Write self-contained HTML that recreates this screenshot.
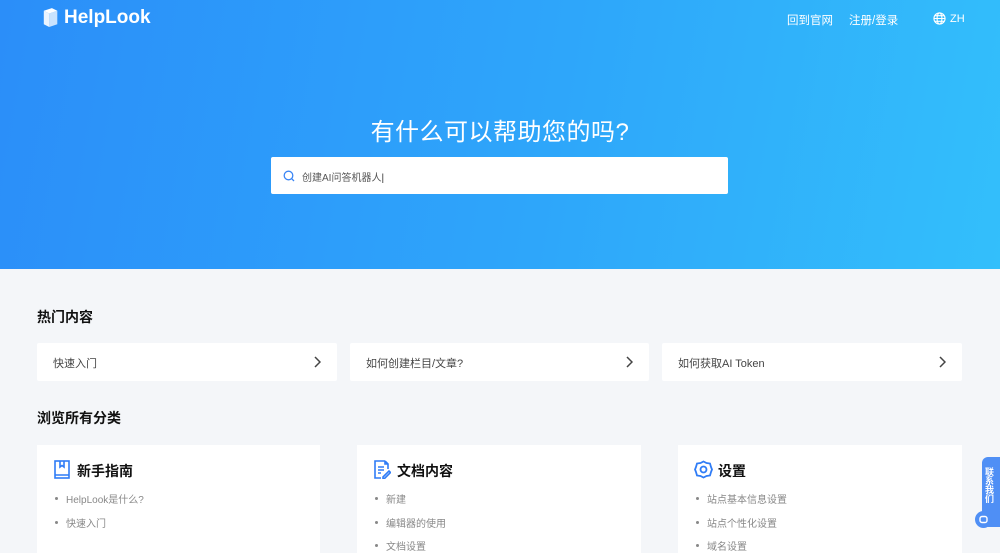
<!DOCTYPE html>
<html style="width:1000px;height:553px;overflow:hidden"><head><meta charset="utf-8">
<style>
*{margin:0;padding:0;box-sizing:border-box}
body{width:1000px;height:553px;overflow:hidden;background:#f4f6f9;font-family:"Liberation Sans","Noto Sans CJK SC",sans-serif;position:relative}
.hero{position:absolute;left:0;top:0;width:1000px;height:269px;background:linear-gradient(100deg,#2b8ef9 0%,#2ea6fa 55%,#33bffb 100%)}
.logo{position:absolute;left:42px;top:7px;display:flex;align-items:center;color:#fff;font-size:19px;font-weight:bold}
.nav{position:absolute;top:12px;color:#fff;font-size:11.5px}
h1{position:absolute;left:0;width:1000px;top:112px;text-align:center;color:#fff;font-size:24px;font-weight:normal;letter-spacing:0.5px}
.search{position:absolute;left:271px;top:157px;width:457px;height:37px;background:#fff;border-radius:2px}
.search span{position:absolute;left:31px;top:12px;font-size:10px;color:#555}
.sec{position:absolute;left:37px;font-size:14px;font-weight:bold;color:#111}
.hot{position:absolute;top:343px;height:38px;background:#fff;border-radius:2px;font-size:11px;color:#444}
.hot span{position:absolute;left:16px;top:12px}
.hot svg{position:absolute;right:16px;top:13px}
.cat{position:absolute;top:445px;height:120px;background:#fff}
.cat .t{position:absolute;left:40px;top:16px;font-size:14px;font-weight:bold;color:#111}
.cat svg{position:absolute;left:16px;top:15px}
.cat ul{position:absolute;left:18px;top:46px;list-style:none}
.cat li{font-size:10px;color:#888;height:23.5px;position:relative;padding-left:11px}
.cat li:before{content:"";position:absolute;left:0;top:6px;width:3px;height:3px;border-radius:50%;background:#888}
.tab{position:absolute;left:982px;top:457px;width:18px;height:70px;background:#4f8ff5;border-radius:6px 0 0 6px}
.tab span{position:absolute;left:1px;top:10px;writing-mode:vertical-rl;color:#fff;font-size:9px;font-weight:bold}
.bub{position:absolute;left:975px;top:511px;width:17px;height:17px;border-radius:50%;background:#4f8ff5}
</style></head><body>
<div class="hero"></div>
<div class="logo">
<svg width="18" height="20" viewBox="0 0 20 22"><path d="M2 3 L8 6 L8 21 L2 18Z" fill="#fff" opacity=".9"/><path d="M8 6 L17 3 L17 18 L8 21Z" fill="#fff" opacity=".75"/><path d="M2 3 L11 0 L17 3 L8 6Z" fill="#fff"/></svg>
<span style="margin-left:4px">HelpLook</span></div>
<div class="nav" style="left:787px">回到官网</div>
<div class="nav" style="left:849px">注册/登录</div>
<div class="nav" style="left:933px;display:flex;align-items:center"><svg width="13" height="13" viewBox="0 0 14 14" fill="none" stroke="#fff" stroke-width="1.2"><circle cx="7" cy="7" r="6"/><ellipse cx="7" cy="7" rx="2.6" ry="6"/><path d="M1 7h12M2 4h10M2 10h10"/></svg><span style="margin-left:4px;font-size:11px">ZH</span></div>
<h1>有什么可以帮助您的吗?</h1>
<div class="search"><svg style="position:absolute;left:12px;top:13px" width="12" height="12" viewBox="0 0 12 12" fill="none" stroke="#3b86f5" stroke-width="1.3"><circle cx="5.5" cy="5.5" r="4.3"/><path d="M8.7 8.7L11 11"/></svg><span>创建AI问答机器人<span style="position:static;color:#333">|</span></span></div>
<div class="sec" style="top:307px">热门内容</div>
<div class="hot" style="left:37px;width:300px"><span>快速入门</span><svg width="8" height="12" viewBox="0 0 8 12" fill="none" stroke="#444" stroke-width="1.5"><path d="M2 1l5 5-5 5"/></svg></div>
<div class="hot" style="left:350px;width:299px"><span>如何创建栏目/文章?</span><svg width="8" height="12" viewBox="0 0 8 12" fill="none" stroke="#444" stroke-width="1.5"><path d="M2 1l5 5-5 5"/></svg></div>
<div class="hot" style="left:662px;width:300px"><span>如何获取AI Token</span><svg width="8" height="12" viewBox="0 0 8 12" fill="none" stroke="#444" stroke-width="1.5"><path d="M2 1l5 5-5 5"/></svg></div>
<div class="sec" style="top:408px">浏览所有分类</div>
<div class="cat" style="left:37px;width:283px">
<svg width="18" height="19" viewBox="0 0 18 19" fill="none" stroke="#2f7cf6" stroke-width="1.6"><rect x="2" y="1" width="14" height="17"/><path d="M2 15h14M7 1v6l2-1.5L11 7V1"/></svg>
<div class="t">新手指南</div><ul><li>HelpLook是什么?</li><li>快速入门</li></ul></div>
<div class="cat" style="left:357px;width:284px">
<svg width="18" height="19" viewBox="0 0 18 19" fill="none" stroke="#2f7cf6" stroke-width="1.6"><path d="M12 1H2v17h6M12 1l3 3v5M12 1v3h3M5 7h6M5 10h6M5 13h3M10 17l6-6 1.5 1.5-6 6H10z"/></svg>
<div class="t">文档内容</div><ul><li>新建</li><li>编辑器的使用</li><li>文档设置</li></ul></div>
<div class="cat" style="left:678px;width:284px">
<svg width="19" height="19" viewBox="0 0 19 19" fill="none" stroke="#2f7cf6" stroke-width="1.8"><path d="M9.5 1.5l3 1.5 3.5 0.5 1 3.5 1 2.5-1 2.5-1 3.5-3.5 0.5-3 1.5-3-1.5-3.5-0.5-1-3.5L1 9.5 2 7l1-3.5 3.5-.5z"/><circle cx="9.5" cy="9.5" r="3"/></svg>
<div class="t">设置</div><ul><li>站点基本信息设置</li><li>站点个性化设置</li><li>域名设置</li></ul></div>
<div class="tab"><span>联系我们</span></div>
<div class="bub"><svg style="position:absolute;left:4px;top:4px" width="9" height="9" viewBox="0 0 9 9" fill="none" stroke="#fff" stroke-width="1.4"><rect x="1" y="1.5" width="7" height="6" rx="2"/></svg></div>
</body></html>
